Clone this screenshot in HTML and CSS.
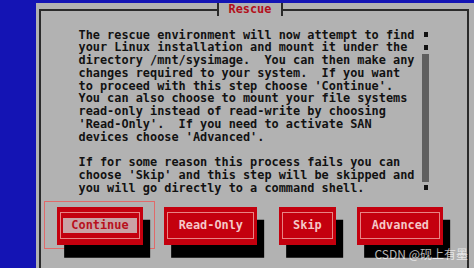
FILE: index.html
```html
<!DOCTYPE html>
<html lang="en">
<head>
  <meta charset="UTF-8" />
  <title>Rescue</title>
  <link rel="stylesheet" href="styles.css">
</head>
<body>
  <div class="window">
    <div class="frame">
      <div class="caption">Rescue</div>
      <div class="content">
        <div class="message-row">
<pre class="message">The rescue environment will now attempt to find
your Linux installation and mount it under the
directory /mnt/sysimage.  You can then make any
changes required to your system.  If you want
to proceed with this step choose 'Continue'.
You can also choose to mount your file systems
read-only instead of read-write by choosing
'Read-Only'.  If you need to activate SAN
devices choose 'Advanced'.

If for some reason this process fails you can
choose 'Skip' and this step will be skipped and
you will go directly to a command shell.</pre>
          <!-- scrollbar -->
          <div class="scroll">
            <div class="sq"></div>
            <div class="sq"></div>
            <div class="track"></div>
            <div class="sq"></div>
          </div>
        </div>

        <div class="buttons">
          <div class="btn focus"><div class="btn-inner"><span class="label">Continue</span></div></div>
          <div class="btn"><div class="btn-inner"><span class="label">Read-Only</span></div></div>
          <div class="btn"><div class="btn-inner"><span class="label">Skip</span></div></div>
          <div class="btn"><div class="btn-inner"><span class="label">Advanced</span></div></div>
        </div>
      </div>
    </div>
  </div>

  <div class="watermark">CSDN @砚上有墨</div>
</body>
</html>
```

FILE: styles.css
```css
body {
  margin: 0;
  padding: 3px 0 0 36px;
  height: 268px;
  box-sizing: border-box;
  overflow: hidden;
  position: relative;
  background: #1414b4;
  font-family: "DejaVu Sans Mono", "Liberation Mono", monospace;
  font-weight: bold;
  font-size: 11.89px;
  line-height: 12.75px;
  color: #121212;
}

.window {
  background: #b2b2b2;
  height: 265px;
  padding: 5.5px 0 0 2.5px;
  box-sizing: border-box;
  overflow: hidden;
}

.frame {
  width: 430px;
  height: 259.5px;
  box-sizing: border-box;
  border: 2px solid #2a2a2a;
  border-bottom: none;
}

.caption {
  width: fit-content;
  margin: -7.5px 0 0 176.5px;
  padding: 0 10px 0 9.5px;
  border-left: 2px solid #2a2a2a;
  border-right: 2px solid #2a2a2a;
  background: #b2b2b2;
  color: #b2101c;
}

.content {
  padding: 12.85px 0 0 38px;
}

.message-row {
  display: flex;
}

.message {
  width: 343.7px;
  margin: 0;
  font: inherit;
  white-space: pre;
}

.scroll {
  width: 7.16px;
  display: flex;
  flex-direction: column;
}

.sq {
  height: 12.75px;
  display: flex;
  align-items: center;
  justify-content: center;
}

.sq::before {
  content: "";
  width: 4px;
  height: 5px;
  background: #111;
}

.track {
  height: 127.5px;
  background: #5f5f5f;
}

.buttons {
  display: flex;
  gap: 21.48px;
  margin: 12.75px 0 0 -21.48px;
  position: relative;
  z-index: 0;
}

.btn {
  position: relative;
  height: 38.25px;
  box-sizing: border-box;
  padding: 5px 3px 6.25px;
  background: #c4000e;
  color: #f4c8c8;
  box-shadow: 7.16px 12.75px 0 #000;
}

.btn-inner {
  border: 1px solid #e88484;
  padding: 5px 2px;
}

.label {
  display: block;
  padding: 1.125px 8.32px;
}

.btn.focus .label {
  background: #c9a3a5;
  color: #b8101c;
}

/* red marker drawn round the focused button */
.btn.focus::after {
  content: "";
  position: absolute;
  left: -13px;
  top: -6px;
  right: -12px;
  bottom: -4px;
  border: 1px solid #e06a6a;
  z-index: -1;
}

.watermark {
  position: absolute;
  right: 6px;
  bottom: 6px;
  font-family: "Noto Sans CJK SC", "Noto Sans", sans-serif;
  font-weight: normal;
  font-size: 12px;
  line-height: 16px;
  color: rgba(255, 255, 255, 0.72);
}
```
